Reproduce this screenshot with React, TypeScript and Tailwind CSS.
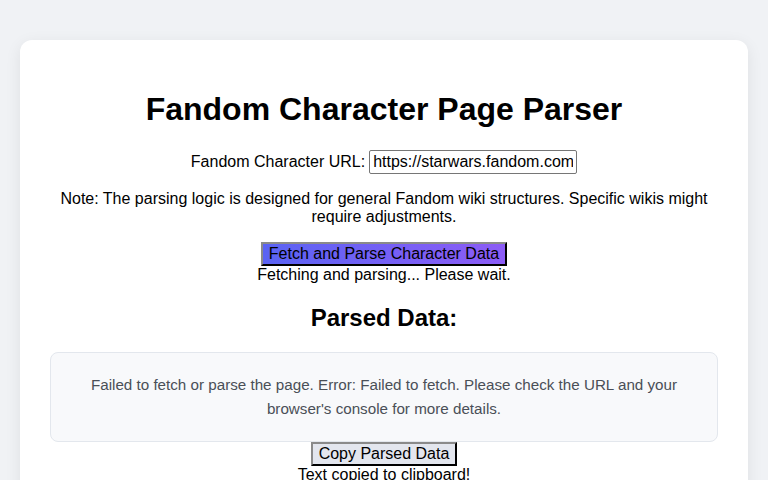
import { useState } from 'react';

export default function App() {
  const [url, setUrl] = useState('https://starwars.fandom.com/wiki/Luke_Skywalker');

  return (
    <div className="min-h-screen bg-[#f0f2f5] px-5 pt-10 font-['Liberation_Sans',Arial,sans-serif] text-black">
      <div className="bg-white rounded-xl shadow-[0_4px_16px_rgba(0,0,0,0.08)] px-[30px] pt-[30px] pb-10 text-center">
        <h1 className="text-[32px] font-bold leading-[normal] my-[21.44px]">
          Fandom Character Page Parser
        </h1>

        <div className="flex items-center justify-center">
          <label htmlFor="url" className="text-base leading-[normal]">
            Fandom Character URL:
          </label>
          <input
            id="url"
            type="text"
            value={url}
            onChange={(e) => setUrl(e.target.value)}
            className="ml-1 w-[208px] h-[24px] border border-[#767676] rounded-[2px] px-[3px] text-base leading-[normal] outline-none"
          />
        </div>

        <p className="my-4 text-base leading-[normal]">
          Note: The parsing logic is designed for general Fandom wiki structures. Specific wikis might
          require adjustments.
        </p>

        <button className="h-[24px] px-[6px] text-base leading-[normal] bg-gradient-to-r from-[#5a63f3] to-[#8c5cf6] border-2 border-t-[#8a8a8a] border-l-[#8a8a8a] border-r-black border-b-black">
          Fetch and Parse Character Data
        </button>
        <p className="text-base leading-[normal]">Fetching and parsing... Please wait.</p>

        <h2 className="text-2xl font-bold leading-[normal] my-[19.92px]">Parsed Data:</h2>

        <div className="bg-[#f8f9fb] border border-[#e3e7ed] rounded-lg p-5 text-[15.2px] leading-6 text-[#4a4f57]">
          Failed to fetch or parse the page. Error: Failed to fetch. Please check the URL and your
          browser's console for more details.
        </div>

        <button className="h-[24px] px-[6px] text-base leading-[normal] bg-[#e3e6ee] border-2 border-t-[#8a8a8a] border-l-[#8a8a8a] border-r-black border-b-black">
          Copy Parsed Data
        </button>
        <p className="text-base leading-[normal]">Text copied to clipboard!</p>
      </div>
    </div>
  );
}
